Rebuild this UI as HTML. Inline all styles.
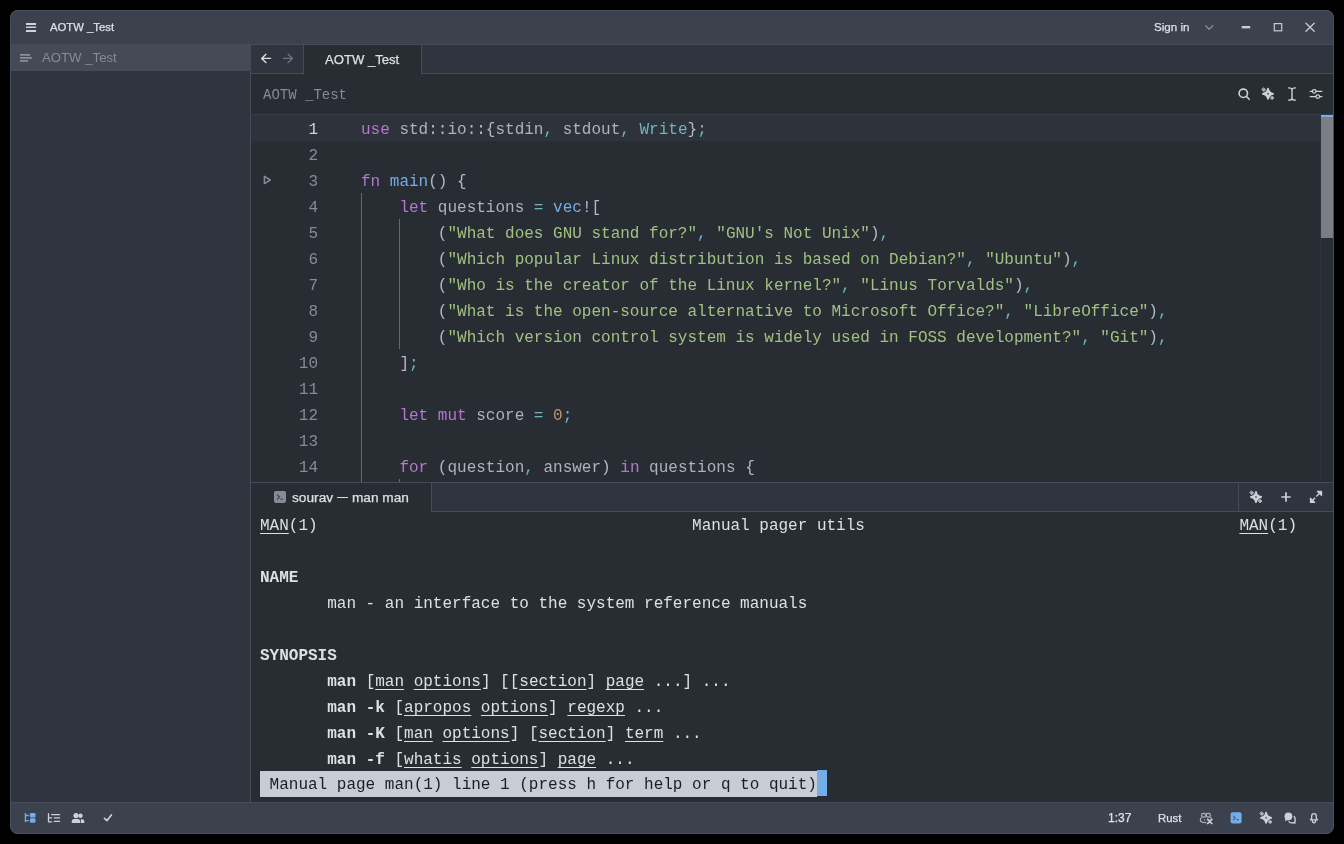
<!DOCTYPE html>
<html><head><meta charset="utf-8"><style>
*{margin:0;padding:0;box-sizing:border-box}
html,body{width:1344px;height:844px;background:#000;overflow:hidden}
body{position:relative;font-family:"Liberation Sans",sans-serif}
.win{position:absolute;left:10px;top:10px;width:1324px;height:824px;border-radius:8px;overflow:hidden;background:#282c33}
.wb{position:absolute;left:10px;top:10px;width:1324px;height:824px;border-radius:8px;border:1px solid #4a4f5b;pointer-events:none}
.in{position:absolute;left:-10px;top:-10px;width:1344px;height:844px;will-change:transform}
.abs{position:absolute}
.cl,.ln,.tl{position:absolute;height:26px;line-height:26px;margin-top:2px;font-family:"Liberation Mono",monospace;font-size:16px;white-space:pre}
.cl{left:361px}
.ln{left:250px;width:68px;text-align:right}
.tl{left:260px;color:#dce0e5;margin-top:2px}
.tl b{font-weight:bold;color:#dce0e5}
.tl u{text-decoration:underline;text-underline-offset:3px}
.ui{font-family:"Liberation Sans",sans-serif;white-space:pre;position:absolute;-webkit-text-stroke:0.25px currentColor}
</style></head><body>
<div class="win"><div class="in">
 <!-- title bar -->
 <div class="abs" style="left:10px;top:10px;width:1324px;height:34px;background:#3b414d"></div>
 <div class="abs" style="left:10px;top:44px;width:1324px;height:1px;background:#464b57"></div>
 <!-- hamburger -->
 <div class="abs" style="left:26px;top:23px;width:10px;height:1.5px;background:#d0d4da"></div>
 <div class="abs" style="left:26px;top:26.5px;width:10px;height:1.5px;background:#d0d4da"></div>
 <div class="abs" style="left:26px;top:30px;width:10px;height:1.5px;background:#d0d4da"></div>
 <div class="ui" style="left:50px;top:19px;font-size:11.3px;line-height:16px;color:#dce0e5">AOTW _Test</div>
 <div class="ui" style="left:1154px;top:19px;font-size:11.6px;line-height:16px;color:#dce0e5">Sign in</div>

 <!-- sidebar -->
 <div class="abs" style="left:10px;top:45px;width:240px;height:757px;background:#2f343e"></div>
 <div class="abs" style="left:10px;top:45px;width:240px;height:26px;background:#454a56"></div>
 <div class="abs" style="left:250px;top:45px;width:1px;height:757px;background:#464b57"></div>
 <div class="ui" style="left:42px;top:49px;font-size:13.2px;line-height:18px;color:#878a98;-webkit-text-stroke:0">AOTW _Test</div>

 <!-- tab bar -->
 <div class="abs" style="left:251px;top:45px;width:1083px;height:28px;background:#2f343e"></div>
 <div class="abs" style="left:251px;top:73px;width:1083px;height:1px;background:#464b57"></div>
 <div class="abs" style="left:303px;top:45px;width:1px;height:28px;background:#464b57"></div>
 <div class="abs" style="left:304px;top:45px;width:117px;height:29px;background:#282c33"></div>
 <div class="abs" style="left:421px;top:45px;width:1px;height:28px;background:#464b57"></div>
 <div class="ui" style="left:325px;top:51px;font-size:13.1px;line-height:18px;color:#dce0e5">AOTW _Test</div>

 <!-- toolbar -->
 <div class="abs" style="left:251px;top:74px;width:1083px;height:40px;background:#282c33"></div>
 <div class="abs" style="left:251px;top:114px;width:1083px;height:1px;background:#363c46"></div>
 <div class="abs" style="left:263px;top:86px;font-family:'Liberation Mono',monospace;font-size:14px;line-height:18px;color:#878a98;white-space:pre">AOTW _Test</div>

 <!-- editor -->
 <div class="abs" style="left:251px;top:115px;width:1069px;height:26px;background:#2d323b"></div>
 <div class="abs" style="left:1320px;top:115px;width:1px;height:367px;background:#2e333c"></div>
 <div class="abs" style="left:1321px;top:115px;width:12px;height:123px;background:#7b7e86"></div>
 <div class="abs" style="left:1321px;top:115px;width:12px;height:2px;background:#74ade8"></div>
 <div class="abs" style="left:361px;top:193px;width:1px;height:289px;background:#66696c"></div>
 <div class="abs" style="left:399px;top:219px;width:1px;height:130px;background:#66696c"></div>
 <div class="abs" style="left:399px;top:479px;width:1px;height:3px;background:#66696c"></div>
<div class="cl" style="top:115px"><span style="color:#b477cf">use</span><span style="color:#acb2be"> std</span><span style="color:#b2b9c6">::</span><span style="color:#acb2be">io</span><span style="color:#b2b9c6">::</span><span style="color:#b2b9c6">{</span><span style="color:#acb2be">stdin</span><span style="color:#6eb4bf">,</span><span style="color:#acb2be"> stdout</span><span style="color:#6eb4bf">,</span><span style="color:#acb2be"> </span><span style="color:#6eb4bf">Write</span><span style="color:#b2b9c6">}</span><span style="color:#6eb4bf">;</span></div>
<div class="ln" style="top:115px;color:#d0d4da">1</div>
<div class="cl" style="top:141px"></div>
<div class="ln" style="top:141px;color:#878a98">2</div>
<div class="cl" style="top:167px"><span style="color:#b477cf">fn</span><span style="color:#acb2be"> </span><span style="color:#73ade9">main</span><span style="color:#b2b9c6">()</span><span style="color:#b2b9c6"> {</span></div>
<div class="ln" style="top:167px;color:#878a98">3</div>
<div class="cl" style="top:193px"><span style="color:#b477cf">    let</span><span style="color:#acb2be"> questions </span><span style="color:#6eb4bf">=</span><span style="color:#acb2be"> </span><span style="color:#73ade9">vec</span><span style="color:#b2b9c6">!</span><span style="color:#b2b9c6">[</span></div>
<div class="ln" style="top:193px;color:#878a98">4</div>
<div class="cl" style="top:219px"><span style="color:#b2b9c6">        (</span><span style="color:#a1c181">&quot;What does GNU stand for?&quot;</span><span style="color:#6eb4bf">,</span><span style="color:#acb2be"> </span><span style="color:#a1c181">&quot;GNU&#x27;s Not Unix&quot;</span><span style="color:#b2b9c6">)</span><span style="color:#6eb4bf">,</span></div>
<div class="ln" style="top:219px;color:#878a98">5</div>
<div class="cl" style="top:245px"><span style="color:#b2b9c6">        (</span><span style="color:#a1c181">&quot;Which popular Linux distribution is based on Debian?&quot;</span><span style="color:#6eb4bf">,</span><span style="color:#acb2be"> </span><span style="color:#a1c181">&quot;Ubuntu&quot;</span><span style="color:#b2b9c6">)</span><span style="color:#6eb4bf">,</span></div>
<div class="ln" style="top:245px;color:#878a98">6</div>
<div class="cl" style="top:271px"><span style="color:#b2b9c6">        (</span><span style="color:#a1c181">&quot;Who is the creator of the Linux kernel?&quot;</span><span style="color:#6eb4bf">,</span><span style="color:#acb2be"> </span><span style="color:#a1c181">&quot;Linus Torvalds&quot;</span><span style="color:#b2b9c6">)</span><span style="color:#6eb4bf">,</span></div>
<div class="ln" style="top:271px;color:#878a98">7</div>
<div class="cl" style="top:297px"><span style="color:#b2b9c6">        (</span><span style="color:#a1c181">&quot;What is the open-source alternative to Microsoft Office?&quot;</span><span style="color:#6eb4bf">,</span><span style="color:#acb2be"> </span><span style="color:#a1c181">&quot;LibreOffice&quot;</span><span style="color:#b2b9c6">)</span><span style="color:#6eb4bf">,</span></div>
<div class="ln" style="top:297px;color:#878a98">8</div>
<div class="cl" style="top:323px"><span style="color:#b2b9c6">        (</span><span style="color:#a1c181">&quot;Which version control system is widely used in FOSS development?&quot;</span><span style="color:#6eb4bf">,</span><span style="color:#acb2be"> </span><span style="color:#a1c181">&quot;Git&quot;</span><span style="color:#b2b9c6">)</span><span style="color:#6eb4bf">,</span></div>
<div class="ln" style="top:323px;color:#878a98">9</div>
<div class="cl" style="top:349px"><span style="color:#b2b9c6">    ]</span><span style="color:#6eb4bf">;</span></div>
<div class="ln" style="top:349px;color:#878a98">10</div>
<div class="cl" style="top:375px"></div>
<div class="ln" style="top:375px;color:#878a98">11</div>
<div class="cl" style="top:401px"><span style="color:#b477cf">    let</span><span style="color:#acb2be"> </span><span style="color:#b477cf">mut</span><span style="color:#acb2be"> score </span><span style="color:#6eb4bf">=</span><span style="color:#acb2be"> </span><span style="color:#bf956a">0</span><span style="color:#6eb4bf">;</span></div>
<div class="ln" style="top:401px;color:#878a98">12</div>
<div class="cl" style="top:427px"></div>
<div class="ln" style="top:427px;color:#878a98">13</div>
<div class="cl" style="top:453px"><span style="color:#b477cf">    for</span><span style="color:#acb2be"> </span><span style="color:#b2b9c6">(</span><span style="color:#acb2be">question</span><span style="color:#6eb4bf">,</span><span style="color:#acb2be"> answer</span><span style="color:#b2b9c6">)</span><span style="color:#acb2be"> </span><span style="color:#b477cf">in</span><span style="color:#acb2be"> questions </span><span style="color:#b2b9c6">{</span></div>
<div class="ln" style="top:453px;color:#878a98">14</div>
<div class="cl" style="top:479px"><span style="color:#b477cf">        let</span></div>
<div class="ln" style="top:479px;color:#878a98">15</div>

 <!-- pane border -->
 <div class="abs" style="left:251px;top:482px;width:1083px;height:1px;background:#464b57"></div>
 <!-- terminal tab bar -->
 <div class="abs" style="left:251px;top:483px;width:1083px;height:28px;background:#2f343e"></div>
 <div class="abs" style="left:251px;top:511px;width:1083px;height:1px;background:#464b57"></div>
 <div class="abs" style="left:251px;top:483px;width:180px;height:29px;background:#282c33"></div>
 <div class="abs" style="left:431px;top:483px;width:1px;height:28px;background:#464b57"></div>
 <div class="abs" style="left:1238px;top:483px;width:1px;height:28px;background:#464b57"></div>
 <div class="ui" style="left:292px;top:489px;font-size:13.7px;line-height:18px;color:#dce0e5">sourav</div>
 <div class="abs" style="left:337px;top:497px;width:11px;height:1.2px;background:#d5d9df"></div>
 <div class="ui" style="left:352px;top:489px;font-size:13.65px;line-height:18px;color:#dce0e5">man man</div>

 <!-- terminal -->
 <div class="abs" style="left:251px;top:512px;width:1083px;height:290px;background:#282c33"></div>
<div class="tl" style="top:511px"><u>MAN</u>(1)                                       Manual pager utils                                       <u>MAN</u>(1)</div>
<div class="tl" style="top:537px"></div>
<div class="tl" style="top:563px"><b>NAME</b></div>
<div class="tl" style="top:589px">       man - an interface to the system reference manuals</div>
<div class="tl" style="top:615px"></div>
<div class="tl" style="top:641px"><b>SYNOPSIS</b></div>
<div class="tl" style="top:667px">       <b>man</b> [<u>man</u> <u>options</u>] [[<u>section</u>] <u>page</u> ...] ...</div>
<div class="tl" style="top:693px">       <b>man -k</b> [<u>apropos</u> <u>options</u>] <u>regexp</u> ...</div>
<div class="tl" style="top:719px">       <b>man -K</b> [<u>man</u> <u>options</u>] [<u>section</u>] <u>term</u> ...</div>
<div class="tl" style="top:745px">       <b>man -f</b> [<u>whatis</u> <u>options</u>] <u>page</u> ...</div>
 <div class="abs" style="left:260px;top:771px;width:557px;height:26px;background:#c8ccd4"></div>
 <div class="tl" style="top:770px;color:#1b1e23"> Manual page man(1) line 1 (press h for help or q to quit)</div>
 <div class="abs" style="left:817px;top:770px;width:10px;height:26px;background:#74ade8"></div>

 <!-- status bar -->
 <div class="abs" style="left:10px;top:802px;width:1324px;height:1px;background:#464b57"></div>
 <div class="abs" style="left:10px;top:803px;width:1324px;height:31px;background:#3b414d"></div>
 <div class="ui" style="left:1108px;top:810px;font-size:12px;line-height:16px;color:#dce0e5">1:37</div>
 <div class="ui" style="left:1158px;top:810px;font-size:11.4px;line-height:16px;color:#dce0e5">Rust</div>
<svg class="abs" style="left:0;top:0" width="1344" height="844" viewBox="0 0 1344 844" fill="none" stroke-linecap="round" stroke-linejoin="round">
<!-- hamburger -->
<g stroke="#cdd1d7" stroke-width="1.25"><path d="M26.5,23.5H35.6M26.5,27.1H35.6M26.5,30.5H35.6"/></g>
<!-- sidebar outline -->
<g stroke="#8b8f99" stroke-width="1.8" stroke-linecap="butt"><path d="M20,54.9H30M20,57.9H31.8M20,60.9H28"/></g>
<!-- chevron / window controls -->
<path d="M1205.6,25.6L1209.2,29.3L1212.8,25.6" stroke="#8b8f99" stroke-width="1.3"/>
<rect x="1241.7" y="26" width="8.5" height="2.4" fill="#c8ccd4"/>
<rect x="1274.3" y="23.6" width="7.4" height="7.2" stroke="#c8ccd4" stroke-width="1.2" stroke-linejoin="miter"/>
<path d="M1306,23.2L1314.2,31.2M1314.2,23.2L1306,31.2" stroke="#c8ccd4" stroke-width="1.3"/>
<!-- fold -->
<path d="M264.4,176.4V183.6L270.3,180Z" stroke="#878a98" stroke-width="1.5"/>
<!-- nav arrows -->
<path d="M261.8,58.4H270.6M265.9,54.3L261.7,58.4L265.9,62.5" stroke="#dce0e5" stroke-width="1.4"/>
<path d="M283.6,58.4H292.4M288.2,54.3L292.4,58.4L288.2,62.5" stroke="#6e727c" stroke-width="1.4"/>
<!-- toolbar icons -->
<circle cx="1243.3" cy="93.3" r="4.2" stroke="#cdd1d7" stroke-width="1.6"/>
<path d="M1246.5,96.5L1249.2,99.3" stroke="#cdd1d7" stroke-width="1.6"/>
<path d="M1268,88.7 Q1268.7,93.1 1273.1,93.8 Q1268.7,94.5 1268,98.89999999999999 Q1267.3,94.5 1262.9,93.8 Q1267.3,93.1 1268,88.7Z" fill="#cdd1d7" stroke="#cdd1d7" stroke-width="1.8"/><circle cx="1268" cy="93.8" r="1.1" fill="#282c33" opacity="0.6"/><path d="M1263.8,87.9 l1.8,1.8 l-1.8,1.8 l-1.8,-1.8Z" fill="#cdd1d7" stroke="#cdd1d7" stroke-width="1" opacity="0.8"/><path d="M1272.1,96.1 l1.8,1.8 l-1.8,1.8 l-1.8,-1.8Z" fill="#cdd1d7" stroke="#cdd1d7" stroke-width="1" opacity="0.8"/>
<path d="M1288.6,87.9Q1292,87.9 1292,89.8Q1292,87.9 1295.4,87.9M1292,89.8V98.2M1288.6,100.1Q1292,100.1 1292,98.2Q1292,100.1 1295.4,100.1" stroke="#cdd1d7" stroke-width="1.4"/>
<path d="M1310.2,91.35H1312.35M1316.05,91.35H1321.9M1310.2,96.6H1315.85M1319.55,96.6H1321.9" stroke="#cdd1d7" stroke-width="1.25"/>
<circle cx="1314.2" cy="91.35" r="1.85" stroke="#cdd1d7" stroke-width="1.25"/>
<circle cx="1317.7" cy="96.6" r="1.85" stroke="#cdd1d7" stroke-width="1.25"/>
<!-- terminal tab icon -->
<rect x="274" y="490.9" width="12" height="12" rx="1.8" fill="#868b97"/>
<path d="M277.4,495L279.6,497L277.4,499" stroke="#40444c" stroke-width="1.2"/>
<path d="M280.4,499.2H283" stroke="#40444c" stroke-width="1" stroke-linecap="butt"/>
<!-- terminal tab bar right icons -->
<path d="M1256,491.9 Q1256.7,496.3 1261.1,497 Q1256.7,497.7 1256,502.1 Q1255.3,497.7 1250.9,497 Q1255.3,496.3 1256,491.9Z" fill="#cdd1d7" stroke="#cdd1d7" stroke-width="1.8"/><circle cx="1256" cy="497" r="1.1" fill="#2f343e" opacity="0.6"/><path d="M1251.8,491.09999999999997 l1.8,1.8 l-1.8,1.8 l-1.8,-1.8Z" fill="#cdd1d7" stroke="#cdd1d7" stroke-width="1" opacity="0.8"/><path d="M1260.1,499.3 l1.8,1.8 l-1.8,1.8 l-1.8,-1.8Z" fill="#cdd1d7" stroke="#cdd1d7" stroke-width="1" opacity="0.8"/>
<path d="M1286,492.3V501.7M1281.3,497H1290.7" stroke="#cdd1d7" stroke-width="1.7" stroke-linecap="butt"/>
<path d="M1317.3,491.3H1321.6V495.6Z M1310.4,498.2V502.5H1314.7Z" fill="#cdd1d7" stroke="#cdd1d7" stroke-width="1.1"/>
<path d="M1312.2,500.7L1315.1,497.8M1316.3,496.6L1319.4,493.5" stroke="#cdd1d7" stroke-width="1.4" stroke-linecap="butt"/>
<!-- status left icons -->
<g stroke="#74ade8" stroke-width="1.3" stroke-linecap="butt"><path d="M25.4,813.1V822.2M25.4,815.5H28.8M25.4,820.7H28.8"/></g>
<rect x="29.9" y="813" width="5.6" height="4.5" rx="1.2" fill="#74ade8"/>
<rect x="29.9" y="818.2" width="5.6" height="4.6" rx="1.2" fill="#74ade8"/>
<g stroke="#cdd1d7" stroke-width="1.3"><path d="M48.5,813.7V821.8H51.6M48.5,817.8H51.6M51.6,814.6H59.6M54.4,817.9H59.6M54.4,821.4H59.6"/></g>
<circle cx="76" cy="815.6" r="2.6" fill="#cdd1d7"/>
<circle cx="80.5" cy="815.8" r="2.2" fill="#cdd1d7"/>
<path d="M71.8,823V821.3Q71.8,818.9 74.4,818.9H77.5Q80.1,818.9 80.1,821.3V823Z" fill="#cdd1d7"/>
<path d="M80.8,819.3H81.7Q84.3,819.3 84.3,821.6V823H80.8Z" fill="#cdd1d7"/>
<path d="M104.5,818.3L107,820.6L111.4,814.9" stroke="#cdd1d7" stroke-width="1.7"/>
<!-- status right icons -->
<g stroke="#aeb3bd" stroke-width="1.2">
<rect x="1201.6" y="813.4" width="4" height="3.8" rx="1.6"/><rect x="1206.3" y="813.4" width="4" height="3.8" rx="1.6"/>
<path d="M1201.3,817.6Q1200.3,818.4 1200.3,819.8Q1200.3,822.7 1205.8,822.7M1210.7,817.4L1211,818.4"/>
</g>
<circle cx="1204.6" cy="819.9" r="0.8" fill="#8b8f99"/>
<path d="M1207.7,819.4L1211.8,823.5M1211.8,819.4L1207.7,823.5" stroke="#d0d4da" stroke-width="1.7"/>
<rect x="1230.6" y="812.3" width="11" height="11.2" rx="2" fill="#74ade8"/>
<path d="M1233.5,816.2L1235.3,817.9L1233.5,819.6" stroke="#3f5d85" stroke-width="1.15"/><path d="M1236.4,819.7H1238.8" stroke="#3f5d85" stroke-width="1.1" stroke-linecap="butt"/>
<path d="M1266.1,812.6999999999999 Q1266.8,817.0999999999999 1271.1999999999998,817.8 Q1266.8,818.5 1266.1,822.9 Q1265.3999999999999,818.5 1261.0,817.8 Q1265.3999999999999,817.0999999999999 1266.1,812.6999999999999Z" fill="#cdd1d7" stroke="#cdd1d7" stroke-width="1.8"/><circle cx="1266.1" cy="817.8" r="1.1" fill="#3b414d" opacity="0.6"/><path d="M1261.8999999999999,811.9 l1.8,1.8 l-1.8,1.8 l-1.8,-1.8Z" fill="#cdd1d7" stroke="#cdd1d7" stroke-width="1" opacity="0.8"/><path d="M1270.1999999999998,820.1 l1.8,1.8 l-1.8,1.8 l-1.8,-1.8Z" fill="#cdd1d7" stroke="#cdd1d7" stroke-width="1" opacity="0.8"/>
<circle cx="1288.45" cy="816.3" r="3.9" fill="#cdd1d7"/>
<path d="M1285.2,818.8L1285.2,821.2L1288,819.8Z" fill="#cdd1d7"/>
<path d="M1294.3,816.6Q1295.3,818 1295.3,819.8Q1295.3,821.3 1294.6,822.2L1295,823.1L1293.2,822.6Q1292.2,822.9 1291.2,822.9Q1289.8,822.9 1288.9,821.7" stroke="#cdd1d7" stroke-width="1.4"/>
<path d="M1310.4,819.8H1317.6M1310.7,819.6L1311.7,818.2V816.3Q1311.7,813.7 1314,813.7Q1316.3,813.7 1316.3,816.3V818.2L1317.3,819.6M1312.4,820.7Q1312.4,822.8 1314,822.8Q1315.6,822.8 1315.6,820.7" stroke="#cdd1d7" stroke-width="1.3"/>
</svg>
</div></div>
<div class="wb"></div>
</body></html>
